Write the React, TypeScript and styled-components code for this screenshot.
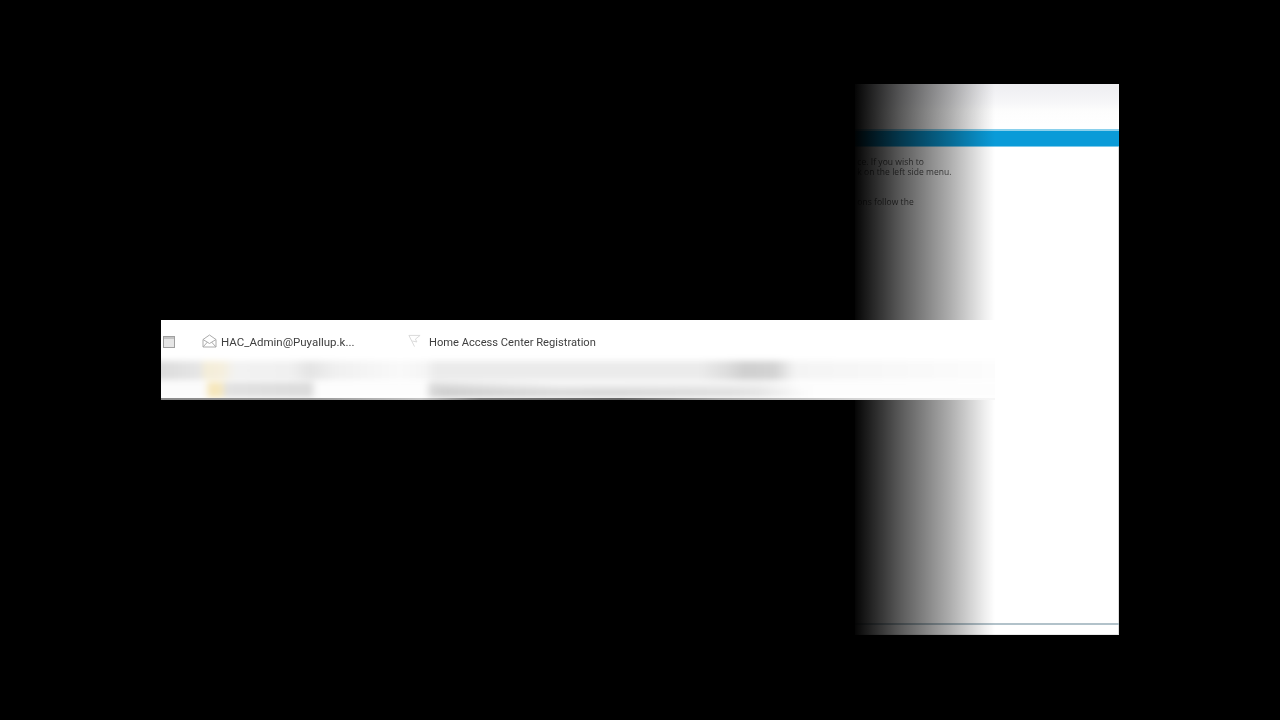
import styled, { createGlobalStyle } from 'styled-components'

const GlobalStyle = createGlobalStyle`
  html, body {
    margin: 0;
    height: 100%;
    background: #000;
  }
  #root {
    height: 100%;
  }
`

const Page = styled.div`
  position: relative;
  width: 1280px;
  height: 720px;
  overflow: hidden;
  background: #000;
  display: flex;
  justify-content: flex-end;
  align-items: flex-start;
  padding: 84px 161px 0 0;
  box-sizing: border-box;
  font-family: 'Open Sans', 'Liberation Sans', sans-serif;
`

const Panel = styled.section`
  position: relative;
  width: 264px;
  height: 551px;
  background: #fff;
  overflow: hidden;
  display: flex;
  flex-direction: column;
  box-shadow: inset -1px 0 0 #dcdcdc, inset 0 -1px 0 #e8e8e8;
`

const PanelHeader = styled.div`
  height: 45px;
  flex: none;
  background: linear-gradient(#eeeef1 0, #f6f6f8 18px, #fdfdfd 27px, #fff 40px);
`

const BlueBar = styled.div`
  height: 18px;
  flex: none;
  background: #0a9bd8;
  border-top: 2px solid #8ad0ec;
  border-bottom: 1px solid #7cc9ea;
  box-sizing: border-box;
  filter: blur(0.4px);
`

const PanelBody = styled.div`
  flex: 1;
  padding-top: 10px;
  font-size: 8.5px;
  line-height: 10px;
  letter-spacing: 0.05px;
  color: #5a5a5a;
  filter: blur(0.55px);
  white-space: nowrap;
`

const PanelLine = styled.p<{ $gap?: boolean }>`
  margin: ${({ $gap }) => ($gap ? '20px' : '0')} 0 0 0;
`

const FooterRule = styled.div`
  height: 2px;
  flex: none;
  margin-bottom: 10px;
  background: #b2c2ca;
`

const Fade = styled.div`
  position: absolute;
  inset: 0;
  background: linear-gradient(
    90deg,
    rgba(0, 0, 0, 0.98) 0,
    rgba(0, 0, 0, 0.65) 45px,
    rgba(0, 0, 0, 0.32) 95px,
    rgba(0, 0, 0, 0.08) 128px,
    rgba(0, 0, 0, 0) 140px
  );
`

const Strip = styled.div`
  position: absolute;
  left: 161px;
  top: 320px;
  width: 834px;
  height: 80px;
  background: #fff;
  display: flex;
  flex-direction: column;
  overflow: hidden;
`

const MailRow = styled.div`
  height: 40px;
  flex: none;
  display: flex;
  align-items: center;
  padding-top: 4px;
  box-sizing: border-box;
  font-family: Roboto, 'Open Sans', sans-serif;
  color: #404040;
  filter: blur(0.25px);
`

const Checkbox = styled.span`
  width: 12px;
  height: 12px;
  margin-left: 2px;
  flex: none;
  box-sizing: border-box;
  border: 1px solid #a0a0a0;
  background: linear-gradient(#c4c4c4 0, #c4c4c4 2px, #e6e6e6 2px);
`

const IconSlot = styled.span<{ $left: number; $width: number; $lift: number }>`
  margin-left: ${({ $left }) => $left}px;
  margin-bottom: ${({ $lift }) => $lift}px;
  width: ${({ $width }) => $width}px;
  flex: none;
  display: flex;
`

const Sender = styled.span`
  width: 187px;
  flex: none;
  margin-left: 4px;
  font-size: 11.5px;
  white-space: nowrap;
`

const Subject = styled.span`
  margin-left: 8px;
  font-size: 11.15px;
  white-space: nowrap;
`

const Smudges = styled.div`
  flex: 1;
  margin: 0 -8px;
  background:
    linear-gradient(90deg,
      rgba(170, 170, 170, 0) 0, rgba(170, 170, 170, 0) 272px,
      rgba(170, 170, 170, 0.3) 292px, rgba(170, 170, 170, 0.35) 462px,
      rgba(170, 170, 170, 0.22) 582px, rgba(170, 170, 170, 0) 662px) 0 100% / 100% 10px no-repeat,
    linear-gradient(90deg,
      #dcdcdc 8px, #e6e6e6 47px, #f4edd8 52px, #f5efdd 69px, #f2f2f2 82px,
      #f0f0f0 137px, #e4e4e4 157px, #f0f0f0 182px, #f9f9f9 247px, #f5f5f5 272px,
      #ebebeb 282px, #ebebeb 547px, #dedede 572px, #cfcfcf 592px, #d3d3d3 622px,
      #f4f4f4 642px, #fcfcfc 842px) 0 1px / 100% 19px no-repeat,
    linear-gradient(90deg,
      #fbfbfb 0, #fbfbfb 52px, #f6e6b8 57px, #f5e8c2 69px, #e2e2e2 73px,
      #dcdcdc 157px, #fdfdfd 164px, #fdfdfd 272px, #dcdcdc 279px, #e6e6e6 327px,
      #f3f3f3 407px, #f0f0f0 547px, #f0f0f0 607px, #fdfdfd 647px) 0 22px / 100% 16px no-repeat;
  filter: blur(3px);
`

const EdgeLine = styled.div`
  height: 2px;
  flex: none;
  background: linear-gradient(
    90deg,
    #8a8a8a 0,
    #999 150px,
    #c4c4c4 260px,
    #777 320px,
    #666 460px,
    #a6a6a6 560px,
    #d4d4d4 690px,
    #f6f6f6 830px
  );
  filter: blur(0.5px);
`

function EnvelopeIcon() {
  return (
    <svg width="15" height="14" viewBox="0 0 15 14" fill="none" stroke="#ababab" strokeWidth="1">
      <path d="M1 5.5 7.5 1 14 5.5V13H1Z" />
      <path d="M1 5.5 7.5 9.5 14 5.5M1 13 5.5 8M14 13 9.5 8" />
    </svg>
  )
}

function FlagIcon() {
  return (
    <svg width="14" height="14" viewBox="0 0 14 14" fill="none" stroke="#d8d8d8" strokeWidth="1">
      <path d="M1 1 7 13M1 1H13L8 5 9.5 8 4.5 7" />
    </svg>
  )
}

function App() {
  return (
    <>
      <GlobalStyle />
      <Page>
        <Panel>
          <PanelHeader />
          <BlueBar />
          <PanelBody>
            <PanelLine>&nbsp;ce. If you wish to</PanelLine>
            <PanelLine>&nbsp;k on the left side menu.</PanelLine>
            <PanelLine $gap>&nbsp;ons follow the</PanelLine>
          </PanelBody>
          <FooterRule />
          <Fade />
        </Panel>
        <Strip>
          <MailRow>
            <Checkbox />
            <IconSlot $left={27} $width={15} $lift={3}>
              <EnvelopeIcon />
            </IconSlot>
            <Sender>HAC_Admin@Puyallup.k...</Sender>
            <IconSlot $left={0} $width={13} $lift={3}>
              <FlagIcon />
            </IconSlot>
            <Subject>Home Access Center Registration</Subject>
          </MailRow>
          <Smudges />
          <EdgeLine />
        </Strip>
      </Page>
    </>
  )
}

export default App
